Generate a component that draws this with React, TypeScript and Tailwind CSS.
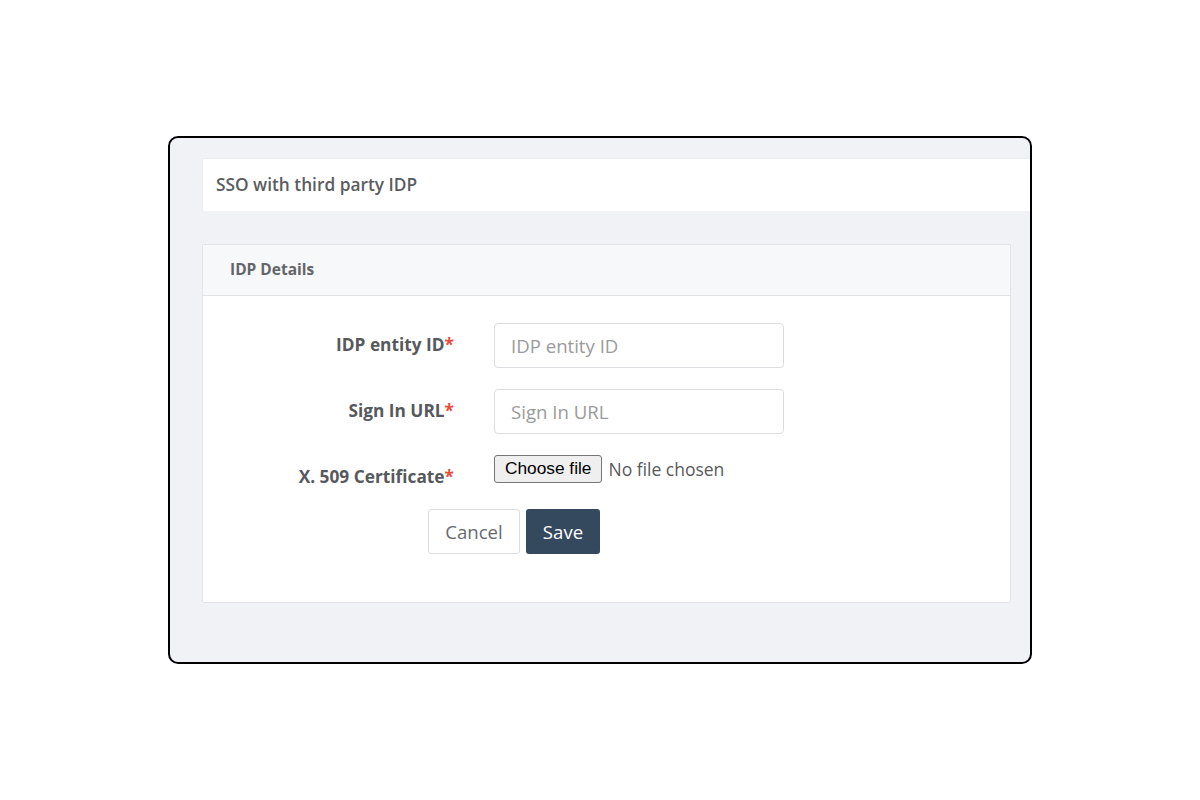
const labelCls =
  "w-[251px] shrink-0 text-right text-[17.3px] font-bold text-[#57595c]";

const Req = () => <span className="text-[#e74c3c]">*</span>;

const App = () => {
  return (
    <div
      className="w-[1200px] h-[800px] bg-white pt-[136px] pl-[168px]"
      style={{ fontFamily: '"Open Sans", "Noto Sans", sans-serif' }}
    >
      <div className="w-[864px] h-[528px] border-2 border-black rounded-[10px] bg-[#f1f2f6] pt-[20px] pl-[32px] overflow-hidden">
        {/* Title bar */}
        <div className="h-[53px] bg-white border-t border-l border-[#ebecef] rounded-tl-[2px] flex items-center pl-[13px]">
          <span className="text-[17.3px] font-semibold text-[#5a5c60]">
            SSO with third party IDP
          </span>
        </div>

        {/* IDP details card */}
        <div className="mt-[33px] w-[809px] bg-white border border-[#e3e4e8] rounded-[2px]">
          <div className="h-[51px] bg-[#f7f8fa] border-b border-[#e3e4e8] flex items-center pl-[27px]">
            <span className="text-[15.5px] font-bold text-[#636569]">IDP Details</span>
          </div>

          <div className="pt-[27px] pb-[48px]">
            <div className="flex items-center h-[44px]">
              <label className={labelCls}>
                IDP entity ID<Req />
              </label>
              <input
                placeholder="IDP entity ID"
                className="ml-[40px] w-[290px] h-[45px] border border-[#dcdde1] rounded-[4px] pl-[16px] text-[18.6px] text-[#555] placeholder:text-[#9a9a9a] outline-none"
              />
            </div>

            <div className="flex items-center h-[44px] mt-[22px]">
              <label className={labelCls}>
                Sign In URL<Req />
              </label>
              <input
                placeholder="Sign In URL"
                className="ml-[40px] w-[290px] h-[45px] border border-[#dcdde1] rounded-[4px] pl-[16px] text-[18.6px] text-[#555] placeholder:text-[#9a9a9a] outline-none"
              />
            </div>

            <div className="flex h-[44px] mt-[22px]">
              <label className={labelCls + " self-center"}>
                X. 509 Certificate<Req />
              </label>
              <div className="ml-[40px] flex items-start gap-[6px]">
                <span
                  className="h-[28px] px-[10px] flex items-center bg-[#efefef] border border-[#767676] rounded-[3px] text-black text-[17.3px]"
                  style={{ fontFamily: '"Liberation Sans", Arial, sans-serif' }}
                >
                  Choose file
                </span>
                <span className="h-[28px] flex items-center text-[17.5px] text-[#58595b]">
                  No file chosen
                </span>
              </div>
            </div>

            <div className="flex gap-[6px] ml-[225px] mt-[10px]">
              <button className="w-[92px] h-[45px] bg-white border border-[#dcdde1] rounded-[3px] text-[18.6px] text-[#666a6f]">
                Cancel
              </button>
              <button className="w-[74px] h-[45px] bg-[#34495e] rounded-[3px] text-[18.6px] text-white">
                Save
              </button>
            </div>
          </div>
        </div>
      </div>
    </div>
  );
};

export default App;
